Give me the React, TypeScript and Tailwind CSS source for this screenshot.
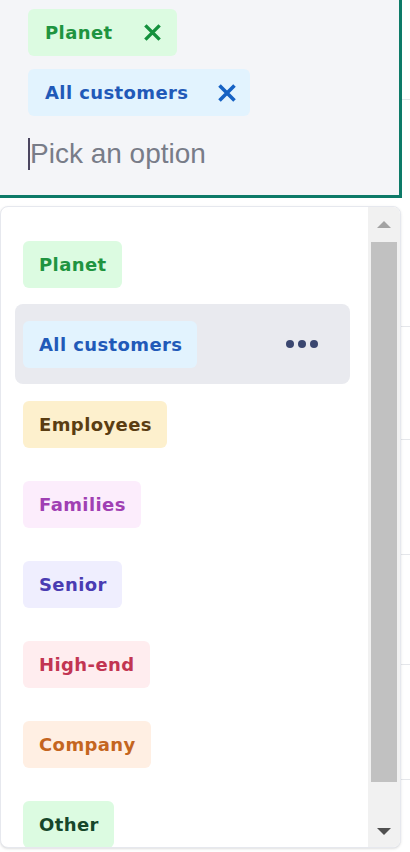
type Tag = { label: string; bg: string; text: string };

const options: Tag[] = [
  { label: "Planet", bg: "bg-[#dcfbe1]", text: "text-[#1f9440]" },
  { label: "All customers", bg: "bg-[#e2f3fe]", text: "text-[#2159b8]" },
  { label: "Employees", bg: "bg-[#fdf0cd]", text: "text-[#5a3d12]" },
  { label: "Families", bg: "bg-[#fcedfc]", text: "text-[#a03fb3]" },
  { label: "Senior", bg: "bg-[#efeefe]", text: "text-[#4a3cb2]" },
  { label: "High-end", bg: "bg-[#ffedef]", text: "text-[#c23552]" },
  { label: "Company", bg: "bg-[#ffefe3]", text: "text-[#c4651f]" },
  { label: "Other", bg: "bg-[#dcfbe1]", text: "text-[#16462a]" },
];

const chipFont = { fontFamily: "'DejaVu Sans', Verdana, sans-serif" };

const CloseIcon = ({ className }: { className?: string }) => (
  <svg className={className} viewBox="0 0 20 20" fill="none" stroke="currentColor" strokeWidth={3.6}>
    <path d="M2.5 2.5 L17.5 17.5 M17.5 2.5 L2.5 17.5" />
  </svg>
);

const Chip = ({ tag }: { tag: Tag }) => (
  <div
    className={`flex items-center h-[47px] pl-4 pr-[15px] rounded-md ${tag.bg} ${tag.text} text-[18px] font-bold tracking-[0.4px]`}
    style={chipFont}
  >
    {tag.label}
  </div>
);

const App = () => {
  return (
    <div className="relative w-[410px] h-[852px] overflow-hidden bg-white">
      {/* background table lines on the right */}
      <div className="absolute right-0 top-0 w-[10px] h-full flex flex-col">
        <div className="h-[100px] border-b border-[#e5e7eb]" />
        <div className="h-[227px] border-b border-[#e5e7eb]" />
        <div className="h-[113px] border-b border-[#e5e7eb]" />
        <div className="h-[115px] border-b border-[#e5e7eb]" />
        <div className="h-[110px] border-b border-[#e5e7eb]" />
        <div className="h-[115px] border-b border-[#e5e7eb]" />
      </div>

      {/* input box */}
      <div className="relative w-[402px] h-[198px] bg-[#f4f5f8] border-r-[3px] border-b-[3px] border-[#0d7a68] pl-[28px] pt-[9px]">
        <div className="flex flex-col items-start gap-[13px]">
          <div
            className="flex items-center h-[47px] pl-[17px] pr-[15px] rounded-md bg-[#dcfbe1] text-[#1f9440] text-[18px] font-bold tracking-[0.4px]"
            style={chipFont}
          >
            Planet
            <CloseIcon className="ml-[30px] w-[19px] h-[19px] text-[#14913d]" />
          </div>
          <div
            className="flex items-center h-[47px] pl-[17px] pr-[13px] rounded-md bg-[#e2f3fe] text-[#2159b8] text-[18px] font-bold tracking-[0.4px]"
            style={chipFont}
          >
            All customers
            <CloseIcon className="ml-[29px] w-[20px] h-[20px] text-[#1662c4]" />
          </div>
        </div>
        <div className="flex items-center mt-[22px] h-[32px]">
          <div className="w-[2px] h-[32px] bg-[#4b4660]" />
          <span
            className="text-[28px] text-[#787c88] leading-none"
            style={{ fontFamily: "'Liberation Sans', Arial, sans-serif" }}
          >
            Pick an option
          </span>
        </div>
      </div>

      {/* dropdown */}
      <div className="relative mt-[8px] w-[401px] h-[642px] bg-white border border-[#e6e8ee] rounded-lg flex overflow-hidden shadow-sm">
        <div className="flex-1 flex flex-col pt-[17px] pl-[14px] pr-[18px]">
          {options.map((tag, i) =>
            i === 1 ? (
              <div
                key={tag.label}
                className="flex items-center justify-between h-[80px] px-2 rounded-lg bg-[#e9eaef] shrink-0"
              >
                <Chip tag={tag} />
                <div className="flex gap-[4px] mr-[24px]">
                  <span className="w-[8px] h-[8px] rounded-full bg-[#3b4770]" />
                  <span className="w-[8px] h-[8px] rounded-full bg-[#3b4770]" />
                  <span className="w-[8px] h-[8px] rounded-full bg-[#3b4770]" />
                </div>
              </div>
            ) : (
              <div key={tag.label} className="flex items-center h-[80px] px-2 shrink-0">
                <Chip tag={tag} />
              </div>
            )
          )}
        </div>

        {/* scrollbar */}
        <div className="w-[32px] h-full bg-[#f1f1f1] flex flex-col items-center">
          <div className="h-[35px] flex items-center justify-center">
            <div className="w-0 h-0 border-l-[7px] border-r-[7px] border-b-[7px] border-l-transparent border-r-transparent border-b-[#a3a3a3]" />
          </div>
          <div className="w-[26px] h-[540px] bg-[#c1c1c1]" />
          <div className="flex-1 flex items-end justify-center pb-[12px]">
            <div className="w-0 h-0 border-l-[7px] border-r-[7px] border-t-[7px] border-l-transparent border-r-transparent border-t-[#505050]" />
          </div>
        </div>
      </div>
    </div>
  );
};

export default App;
